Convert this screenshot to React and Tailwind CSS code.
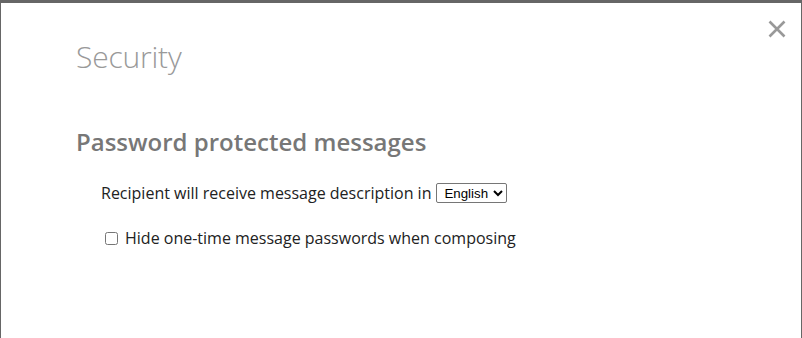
export default function App() {
  return (
    <div className="w-[802px] h-[338px] bg-white overflow-hidden" style={{ fontFamily: '"Open Sans", sans-serif' }}>
      <div className="h-[3px] bg-[#666666]" />
      <div className="relative h-[335px] border-x border-[#666666] bg-white">
        <button className="absolute right-[14px] top-[16px] w-[20px] h-[20px] flex items-center justify-center">
          <svg width="20" height="20" viewBox="0 0 20 20">
            <path d="M2.5 2.5 L17.5 17.5 M17.5 2.5 L2.5 17.5" stroke="#999999" strokeWidth="2.6" strokeLinecap="butt" />
          </svg>
        </button>
        <div className="pl-[75px] pt-[34px]">
          <h1 className="text-[30px] leading-[40px] font-light text-[#999999] tracking-[-0.2px]">Security</h1>
          <h2 className="mt-[49px] text-[24px] leading-[32px] font-semibold text-[#777777]">Password protected messages</h2>
          <div className="pl-[25px] mt-[23px] text-[16px] text-[#222222]">
            <div className="flex items-center h-[24px]">
              <span>Recipient will receive message description in</span>
              <select className="ml-[5px] h-[20px] w-[71px] border border-[#767676] rounded-[2px] text-[13.3px] pl-[3px] pr-[1px] bg-white text-black" style={{ fontFamily: '"Liberation Sans", Arial, sans-serif' }} defaultValue="English">
                <option>English</option>
              </select>
            </div>
            <label className="flex items-center h-[24px] mt-[21px] pl-[4px]">
              <input type="checkbox" className="w-[13px] h-[13px] m-0" />
              <span className="ml-[7px]">Hide one-time message passwords when composing</span>
            </label>
          </div>
        </div>
      </div>
    </div>
  );
}
